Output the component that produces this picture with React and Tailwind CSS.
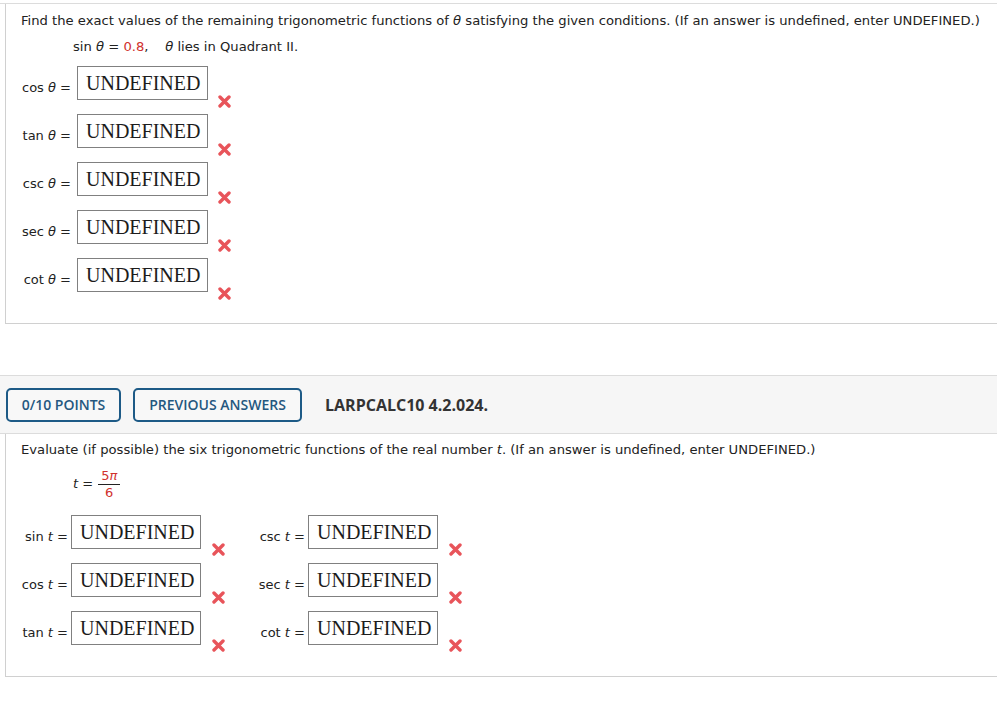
import React from 'react'

const verdana = { fontFamily: '"DejaVu Sans", Verdana, sans-serif' }

function WrongMark() {
  return (
    <svg width="13" height="13" viewBox="0 0 13 13" className="shrink-0">
      <path d="M2 2 L11 11 M11 2 L2 11" stroke="#e8545a" strokeWidth="3.4" strokeLinecap="round" />
    </svg>
  )
}

function AnswerBox({ width }) {
  return (
    <div
      className={`${width} h-[34px] shrink-0 border border-[#808080] bg-white flex items-center pl-[8px] text-[20px] text-[#1c1c1c] leading-none`}
      style={{ fontFamily: '"Liberation Serif", "Times New Roman", serif' }}
    >
      UNDEFINED
    </div>
  )
}

function ThetaRow({ fn }) {
  return (
    <div className="flex h-[48px]">
      <div className="w-[50px] mt-[12px] text-right text-[13px] leading-[20px] text-[#222] whitespace-nowrap">
        {fn} <i>θ</i> =
      </div>
      <div className="w-[6px]" />
      <AnswerBox width="w-[131px]" />
      <div className="ml-[10px] mt-[29px]">
        <WrongMark />
      </div>
    </div>
  )
}

function TCell({ fn }) {
  return (
    <div className="flex h-[48px] w-[237px]">
      <div className="w-[47px] mt-[12px] text-right text-[13px] leading-[20px] text-[#222] whitespace-nowrap">
        {fn} <i>t</i> =
      </div>
      <div className="w-[3px]" />
      <AnswerBox width="w-[130px]" />
      <div className="ml-[11px] mt-[28px]">
        <WrongMark />
      </div>
    </div>
  )
}

export default function App() {
  const thetaFns = ['cos', 'tan', 'csc', 'sec', 'cot']
  return (
    <div className="w-[997px] h-[704px] bg-white overflow-hidden text-[#222]" style={verdana}>
      <div className="mt-[3px] border-t border-[#dcdcdc]">
        <div className="ml-[5px] border-l border-b border-[#d0d0d0] pl-[15px] pt-[6px] pb-[17px]">
          <p className="text-[13.15px] leading-[22px] whitespace-nowrap">
            Find the exact values of the remaining trigonometric functions of <i>θ</i> satisfying the given conditions. (If an answer is undefined, enter UNDEFINED.)
          </p>
          <p className="text-[13.15px] leading-[20px] mt-[5px] ml-[52px] whitespace-nowrap">
            sin <i>θ</i> = <span className="text-[#d0312d]">0.8</span>,&nbsp;&nbsp;&nbsp; <i>θ</i> lies in Quadrant II.
          </p>
          <div className="mt-[9px] flex flex-col">
            {thetaFns.map(fn => (
              <ThetaRow key={fn} fn={fn} />
            ))}
          </div>
        </div>
      </div>

      <div className="mt-[51px] border-t border-b border-[#dcdcdc] bg-[#f6f6f6] h-[59px] flex items-center pl-[6px]">
        <div className="flex items-center gap-[12px]" style={{ fontFamily: '"Open Sans", sans-serif' }}>
          <div className="w-[115px] h-[34px] border-2 border-[#1d5a86] rounded-[5px] flex items-center justify-center text-[14px] font-semibold text-[#25577f] bg-[#f8f8f8]">
            0/10 POINTS
          </div>
          <div className="w-[169px] h-[34px] border-2 border-[#1d5a86] rounded-[5px] flex items-center justify-center text-[14px] font-semibold text-[#25577f] bg-[#f8f8f8]">
            PREVIOUS ANSWERS
          </div>
          <div className="ml-[11px] text-[16px] font-bold text-[#333]">LARPCALC10 4.2.024.</div>
        </div>
      </div>

      <div className="ml-[5px] border-l border-b border-[#d0d0d0] pl-[15px] pt-[5px] pb-[17px]">
        <p className="text-[13.15px] leading-[22px] whitespace-nowrap">
          Evaluate (if possible) the six trigonometric functions of the real number <i>t</i>. (If an answer is undefined, enter UNDEFINED.)
        </p>
        <div className="ml-[52px] mt-[5px] flex items-center text-[13px] h-[36px]">
          <span className="whitespace-nowrap">
            <i>t</i> =
          </span>
          <span className="ml-[5px] inline-flex flex-col items-center leading-[16px] text-[#d0312d]">
            <span className="px-[3px] border-b border-[#222]">
              5<i>π</i>
            </span>
            <span>6</span>
          </span>
        </div>
        <div className="mt-[13px] grid grid-cols-[237px_237px]">
          <TCell fn="sin" />
          <TCell fn="csc" />
          <TCell fn="cos" />
          <TCell fn="sec" />
          <TCell fn="tan" />
          <TCell fn="cot" />
        </div>
      </div>
    </div>
  )
}
